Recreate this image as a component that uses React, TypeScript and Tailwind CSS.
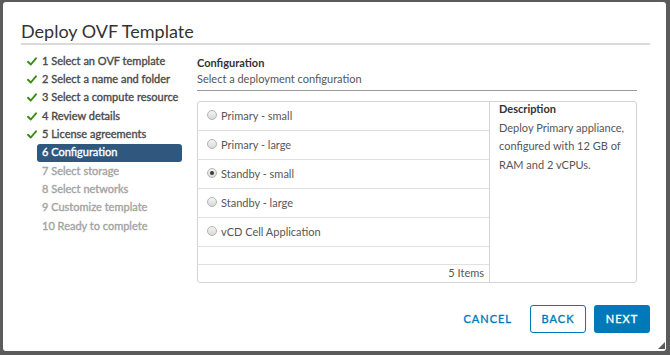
import React from 'react';

// --- DATA ---

const steps = [
  { n: 1, label: 'Select an OVF template', state: 'done' },
  { n: 2, label: 'Select a name and folder', state: 'done' },
  { n: 3, label: 'Select a compute resource', state: 'done' },
  { n: 4, label: 'Review details', state: 'done' },
  { n: 5, label: 'License agreements', state: 'done' },
  { n: 6, label: 'Configuration', state: 'active' },
  { n: 7, label: 'Select storage', state: 'todo' },
  { n: 8, label: 'Select networks', state: 'todo' },
  { n: 9, label: 'Customize template', state: 'todo' },
  { n: 10, label: 'Ready to complete', state: 'todo' },
];

const configs = [
  { id: 'primary-small', label: 'Primary - small' },
  { id: 'primary-large', label: 'Primary - large' },
  { id: 'standby-small', label: 'Standby - small' },
  { id: 'standby-large', label: 'Standby - large' },
  { id: 'vcd-cell', label: 'vCD Cell Application' },
];

// --- COMPONENTS ---

const Check: React.FC = () => (
  <svg width="10" height="9" viewBox="0 0 10 9" className="block">
    <path d="M1 4.8 L3.8 7.5 L9 1.3" fill="none" stroke="#3b8a12" strokeWidth="1.9" strokeLinecap="round" strokeLinejoin="round" />
  </svg>
);

const Radio: React.FC<{ checked?: boolean }> = ({ checked }) => (
  <span className="w-[10px] h-[10px] rounded-full border border-[#b3b3b3] bg-gradient-to-b from-[#f4f4f4] to-[#d9d9d9] flex items-center justify-center shrink-0 -translate-y-[1px]">
    {checked && <span className="w-[4px] h-[4px] rounded-full bg-[#3a3a3a]" />}
  </span>
);

export default function App() {
  const selected = 'standby-small';

  return (
    <div className="w-[670px] h-[355px] bg-[#5b5b5b] pt-[2px] pl-[3px] pr-[4px] pb-[4px] font-['Lato',_sans-serif]">
      <div className="relative h-full bg-white rounded-[3px] flex flex-col">

        {/* Header */}
        <div className="ml-[18px] mr-[16px] pt-[17px] border-b-2 border-[#dadada]">
          <h1 className="text-[18px] leading-[24px] text-[#333333]">Deploy OVF Template</h1>
        </div>

        {/* Body */}
        <div className="flex pt-[7px] pl-[21px]">
          {/* Steps */}
          <ul className="w-[158px] shrink-0">
            {steps.map(s => (
              <li key={s.n} className="flex items-center h-[18.3px]">
                <span className="w-[13px] flex justify-start pl-[3px]">
                  {s.state === 'done' && <Check />}
                </span>
                <span
                  className={`flex-1 h-[18px] flex items-center pl-[5px] rounded-[3px] text-[11px] [-webkit-text-stroke:0.35px] whitespace-nowrap ${
                    s.state === 'active'
                      ? 'bg-[#30587f] text-white'
                      : s.state === 'done'
                      ? 'text-[#4a4a4a]'
                      : 'text-[#a3a3a3]'
                  }`}
                >
                  {s.n} {s.label}
                </span>
              </li>
            ))}
          </ul>

          {/* Content */}
          <div className="ml-[15px] w-[440px] pt-[3px]">
            <h2 className="text-[11px] leading-[16px] font-bold text-[#333333]">Configuration</h2>
            <p className="text-[11px] leading-[16px] text-[#565656]">Select a deployment configuration</p>
            <div className="mt-[3px] h-px bg-[#9a9a9a]" />

            <div className="mt-[10px] h-[182px] border border-[#d4d4d4] rounded-[3px] flex">
              <div className="w-[292px] flex flex-col border-r border-[#d4d4d4]">
                {configs.map(c => (
                  <label key={c.id} className="h-[29px] flex items-center gap-[4px] pl-[9px] border-b border-[#e0e0e0] text-[11px] text-[#565656]">
                    <Radio checked={c.id === selected} />
                    {c.label}
                  </label>
                ))}
                <div className="h-[18px] border-b border-[#e0e0e0]" />
                <div className="flex-1 flex items-center justify-end pr-[5px] text-[11px] text-[#565656]">5 Items</div>
              </div>
              <div className="flex-1 pl-[9px]">
                <h3 className="text-[11px] leading-[14px] font-bold text-[#333333]">Description</h3>
                <p className="mt-[3px] text-[11px] leading-[18.4px] text-[#565656]">
                  Deploy Primary appliance,<br />configured with 12 GB of<br />RAM and 2 vCPUs.
                </p>
              </div>
            </div>
          </div>
        </div>

        {/* Footer */}
        <div className="mt-auto mb-[18px] mr-[16px] flex justify-end items-center gap-[8px]">
          <button className="h-[28px] px-[12px] mr-[-2px] text-[11px] [-webkit-text-stroke:0.35px] tracking-[0.09em] text-[#0079b8]">CANCEL</button>
          <button className="h-[28px] w-[56px] rounded-[3px] border border-[#0079b8] text-[11px] [-webkit-text-stroke:0.35px] tracking-[0.09em] text-[#0079b8]">BACK</button>
          <button className="h-[28px] w-[56px] rounded-[3px] bg-[#0079b8] text-[11px] [-webkit-text-stroke:0.35px] tracking-[0.09em] text-white">NEXT</button>
        </div>

        {/* Resize grip */}
        <svg width="7" height="7" viewBox="0 0 7 7" className="absolute right-[1px] bottom-[2px]">
          <path d="M7 0 L7 7 L0 7 Z" fill="#5a5a5a" />
        </svg>
      </div>
    </div>
  );
}
